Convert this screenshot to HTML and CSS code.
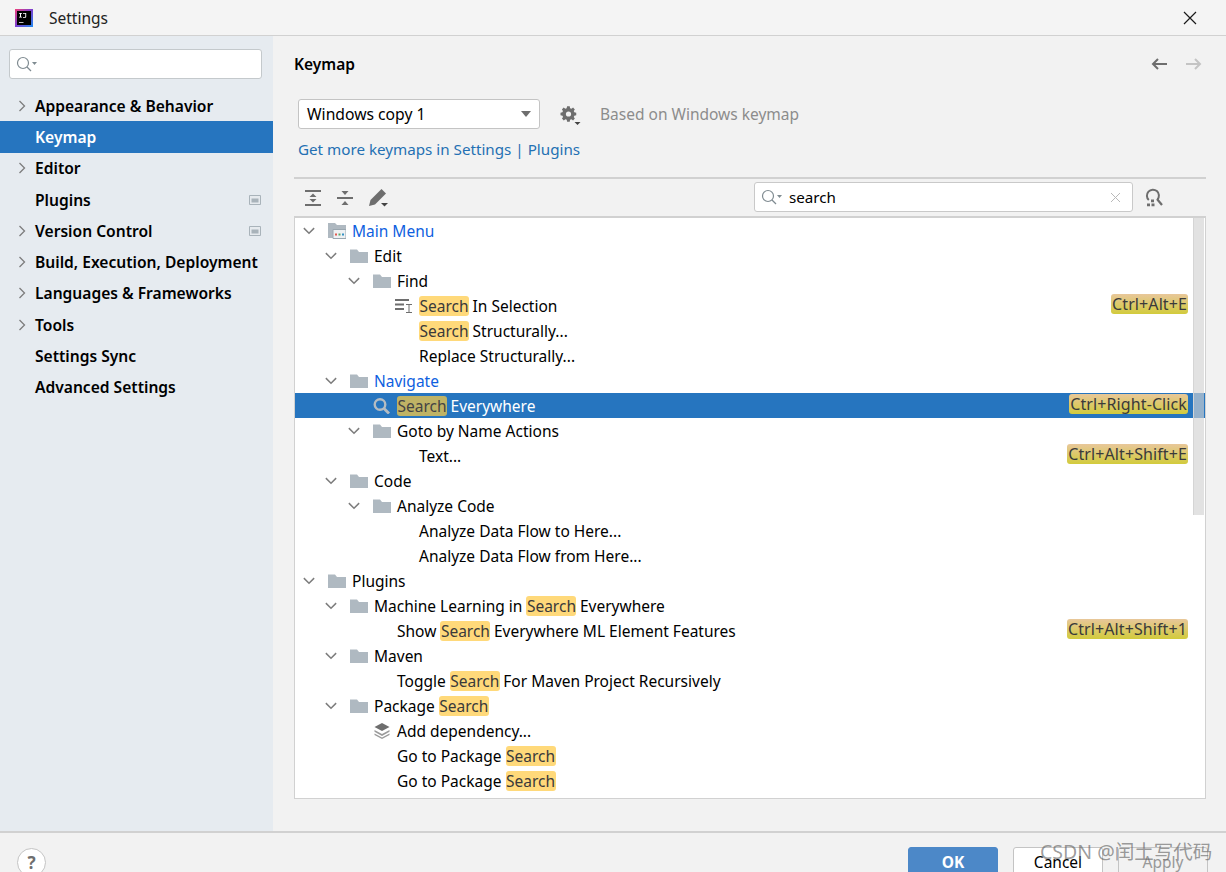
FILE: index.html
```html
<!DOCTYPE html>
<html lang="en">
<head>
<meta charset="utf-8">
<title>Settings</title>
<link rel="stylesheet" href="styles.css">
</head>
<body>
<svg class="defs" width="0" height="0" aria-hidden="true">
  <symbol id="folder" viewBox="0 0 18 16"><path d="M0 1.500h7l2 2.500h9v11H0z" fill="#afb9c1"/></symbol>
  <symbol id="down" viewBox="0 0 14 14"><path d="M2.500 4.500 7 9l4.500-4.500" fill="none" stroke="#7d7d7d" stroke-width="1.300"/></symbol>
  <symbol id="right" viewBox="0 0 14 14"><path d="M4.500 2 9.500 7l-5 5" fill="none" stroke="#7d7d7d" stroke-width="1.300"/></symbol>
  <symbol id="lens" viewBox="0 0 24 16"><circle cx="7" cy="7" r="5.500" fill="none" stroke="#7f8b91" stroke-width="1.200"/><path d="m11 11 4 4" stroke="#7f8b91" stroke-width="1.300"/><path d="M16 6h5l-2.500 3z" fill="#7f8b91"/></symbol>
  <symbol id="proj" viewBox="0 0 12 10"><path d="M.5.5h11v9H.5z" fill="#e6eaee" stroke="#a9b3ba"/><path d="M2.500 3.500h7v4h-7z" fill="#a9b3ba"/></symbol>
</svg>
<div class="window">
  <header class="titlebar">
    <svg class="logo" width="18" height="18" viewBox="0 0 18 18"><defs><linearGradient id="lg" x1="0" y1="0" x2="1" y2="1"><stop offset="0" stop-color="#f0407a"/><stop offset=".5" stop-color="#7a40d0"/><stop offset="1" stop-color="#1f8cf0"/></linearGradient></defs><path d="M0 0h18v18H0z" fill="url(#lg)"/><path d="M2 2h14v14H2z" fill="#000"/><path d="M4 4h3v.8H6v3h1v.8H4v-.8h1v-3H4zM8 4h3.200v3.800c0 .6-.5 1-1.200 1H8V8h1.800c.3 0 .5-.1.500-.4V4.800H8zM4 13h4.500v.8H4z" fill="#fff"/></svg>
    <span class="title">Settings</span>
    <svg class="close" width="14" height="14" viewBox="0 0 14 14"><path d="M1 1l12 12M13 1 1 13" stroke="#1a1a1a" stroke-width="1.200"/></svg>
  </header>
  <div class="main">
    <aside class="sidebar">
      <div class="side-search"><svg width="24" height="16"><use href="#lens"/></svg></div>
      <nav class="nav">
        <div class="nav-item"><svg class="nav-chev" width="14" height="14"><use href="#right"/></svg>Appearance &amp; Behavior</div>
        <div class="nav-item active">Keymap</div>
        <div class="nav-item"><svg class="nav-chev" width="14" height="14"><use href="#right"/></svg>Editor</div>
        <div class="nav-item">Plugins<svg class="nav-proj" width="12" height="10"><use href="#proj"/></svg></div>
        <div class="nav-item"><svg class="nav-chev" width="14" height="14"><use href="#right"/></svg>Version Control<svg class="nav-proj" width="12" height="10"><use href="#proj"/></svg></div>
        <div class="nav-item"><svg class="nav-chev" width="14" height="14"><use href="#right"/></svg>Build, Execution, Deployment</div>
        <div class="nav-item"><svg class="nav-chev" width="14" height="14"><use href="#right"/></svg>Languages &amp; Frameworks</div>
        <div class="nav-item"><svg class="nav-chev" width="14" height="14"><use href="#right"/></svg>Tools</div>
        <div class="nav-item">Settings Sync</div>
        <div class="nav-item">Advanced Settings</div>
      </nav>
    </aside>
    <section class="content">
      <div class="head">
        <h1 class="heading">Keymap</h1>
        <svg class="arrow" width="18" height="14" viewBox="0 0 18 14"><path d="M17 7H3M8 2 3 7l5 5" fill="none" stroke="#6e6e6e" stroke-width="2"/></svg>
        <svg class="arrow next" width="18" height="14" viewBox="0 0 18 14"><path d="M1 7h14M10 2l5 5-5 5" fill="none" stroke="#c4c4c4" stroke-width="2"/></svg>
      </div>
      <div class="scheme">
        <div class="combo">Windows copy 1<span class="caret"></span></div>
        <svg class="gear" width="22" height="22" viewBox="0 0 22 22"><path d="M9.200 2h3l.4 2.200 1.500.6L16 3.500l2 2.100-1.200 1.800.6 1.500 2.200.4v3l-2.200.4-.6 1.500 1.200 1.800-2 2.100-1.900-1.300-1.500.6-.4 2.200h-3l-.4-2.200-1.500-.6-1.900 1.300-2-2.100 1.200-1.800-.6-1.500L1.700 12.300v-3l2.200-.4.600-1.500-1.200-1.800 2-2.100 1.900 1.300 1.500-.6z" transform="translate(0 .5) scale(.88)" fill="#6e6e6e"/><circle cx="9.500" cy="10" r="2.600" fill="#f2f2f2"/><path d="M15.500 18h6l-3 3z" fill="#444"/></svg>
        <span class="based">Based on Windows keymap</span>
      </div>
      <div class="links"><a class="link">Get more keymaps in Settings | Plugins</a></div>
      <div class="toolbar">
        <div class="tools">
          <svg width="18" height="20" viewBox="0 0 18 20"><path d="M1 2h16v2H1zM1 16h16v2H1zM9 5.500l3.500 3.500h-7zM9 14.500 5.500 11h7z" fill="#6e6e6e"/></svg>
          <svg width="18" height="20" viewBox="0 0 18 20"><path d="M1 9h16v2H1zM5.500 3h7L9 7zM5.500 17h7L9 13z" fill="#6e6e6e"/></svg>
          <svg width="20" height="20" viewBox="0 0 20 20"><path d="M13.500 1 18 5.500 7 16.500 1 18l1.500-6z" fill="#6e6e6e"/><path d="M13 15h7l-3.500 3.500z" fill="#444"/></svg>
        </div>
        <div class="filter"><svg width="24" height="16"><use href="#lens"/></svg><span class="filter-text">search</span><svg class="clear" width="11" height="11" viewBox="0 0 11 11"><path d="M1 1l9 9M10 1l-9 9" stroke="#b9b9b9" stroke-width="1"/></svg></div>
        <svg class="find-shortcut" width="22" height="22" viewBox="0 0 22 22"><path d="M5.800 13A6 6 0 1 1 14.500 12.500" fill="none" stroke="#6e6e6e" stroke-width="2"/><path d="m14 12 5 6" stroke="#6e6e6e" stroke-width="2.200"/><path d="M8 12.500h3v2.800H8zM4 16.500h3v2.800H4zM8.500 16.500h3v2.800h-3z" fill="#6e6e6e"/></svg>
      </div>
      <div class="tree">
        <div class="row l0"><svg class="chev" width="16" height="16"><use href="#down"/></svg><svg class="ic" width="18" height="16" viewBox="0 0 18 16"><path d="M0 0h7l2 2h9v5H5v8H0z" fill="#afb9c1"/><path d="M5 6.500h13v9H5z" fill="#eef1f3" stroke="#9aa7b0"/><path d="M7 10.500h2v2H7z" fill="#e25b4f"/><path d="M10.500 10.500h2v2h-2z" fill="#59a869"/><path d="M14 10.500h2v2h-2z" fill="#3592c4"/></svg><span class="blue">Main Menu</span></div>
        <div class="row l1"><svg class="chev" width="16" height="16"><use href="#down"/></svg><svg class="ic" width="18" height="16"><use href="#folder"/></svg>Edit</div>
        <div class="row l2"><svg class="chev" width="16" height="16"><use href="#down"/></svg><svg class="ic" width="18" height="16"><use href="#folder"/></svg>Find</div>
        <div class="row l3"><span class="chev"></span><svg class="ic" width="18" height="16" viewBox="0 0 18 16"><path d="M0 1h14v2H0zM0 5.500h9v2H0zM0 10h9v2H0z" fill="#6e6e6e"/><path d="M11 6h6v1h-2.500v7H17v1h-6v-1h2.500V7H11z" fill="#6e6e6e"/></svg><mark class="hit">Search</mark>In Selection<span class="keys">Ctrl+Alt+E</span></div>
        <div class="row l3"><span class="chev"></span><span class="ic"></span><mark class="hit">Search</mark>Structurally...</div>
        <div class="row l3"><span class="chev"></span><span class="ic"></span>Replace Structurally...</div>
        <div class="row l1"><svg class="chev" width="16" height="16"><use href="#down"/></svg><svg class="ic" width="18" height="16"><use href="#folder"/></svg><span class="blue">Navigate</span></div>
        <div class="row l2 selected"><span class="chev"></span><svg class="ic" width="18" height="16" viewBox="0 0 18 16"><circle cx="7" cy="6.500" r="5.300" fill="none" stroke="#b5bcc2" stroke-width="2.400"/><path d="m11 10.500 5 5" stroke="#b5bcc2" stroke-width="2.800"/></svg><mark class="hit">Search</mark>Everywhere<span class="keys">Ctrl+Right-Click</span></div>
        <div class="row l2"><svg class="chev" width="16" height="16"><use href="#down"/></svg><svg class="ic" width="18" height="16"><use href="#folder"/></svg>Goto by Name Actions</div>
        <div class="row l3"><span class="chev"></span><span class="ic"></span>Text...<span class="keys">Ctrl+Alt+Shift+E</span></div>
        <div class="row l1"><svg class="chev" width="16" height="16"><use href="#down"/></svg><svg class="ic" width="18" height="16"><use href="#folder"/></svg>Code</div>
        <div class="row l2"><svg class="chev" width="16" height="16"><use href="#down"/></svg><svg class="ic" width="18" height="16"><use href="#folder"/></svg>Analyze Code</div>
        <div class="row l3"><span class="chev"></span><span class="ic"></span>Analyze Data Flow to Here...</div>
        <div class="row l3"><span class="chev"></span><span class="ic"></span>Analyze Data Flow from Here...</div>
        <div class="row l0"><svg class="chev" width="16" height="16"><use href="#down"/></svg><svg class="ic" width="18" height="16"><use href="#folder"/></svg>Plugins</div>
        <div class="row l1"><svg class="chev" width="16" height="16"><use href="#down"/></svg><svg class="ic" width="18" height="16"><use href="#folder"/></svg>Machine Learning in&nbsp;<mark class="hit">Search</mark>Everywhere</div>
        <div class="row l2"><span class="chev"></span><span class="ic"></span>Show&nbsp;<mark class="hit">Search</mark>Everywhere ML Element Features<span class="keys">Ctrl+Alt+Shift+1</span></div>
        <div class="row l1"><svg class="chev" width="16" height="16"><use href="#down"/></svg><svg class="ic" width="18" height="16"><use href="#folder"/></svg>Maven</div>
        <div class="row l2"><span class="chev"></span><span class="ic"></span>Toggle&nbsp;<mark class="hit">Search</mark>For Maven Project Recursively</div>
        <div class="row l1"><svg class="chev" width="16" height="16"><use href="#down"/></svg><svg class="ic" width="18" height="16"><use href="#folder"/></svg>Package&nbsp;<mark class="hit">Search</mark></div>
        <div class="row l2"><span class="chev"></span><svg class="ic" width="18" height="16" viewBox="0 0 18 16"><path d="M9 0l7.500 4L9 8 1.500 4z" fill="#6e6e6e"/><path d="M1.500 7 9 11l7.500-4v1.800L9 13 1.500 8.800zM1.500 10.500 9 14.500l7.500-4v1.500L9 16l-7.500-4z" fill="#9a9a9a"/></svg>Add dependency...</div>
        <div class="row l2"><span class="chev"></span><span class="ic"></span>Go to Package&nbsp;<mark class="hit">Search</mark></div>
        <div class="row l2"><span class="chev"></span><span class="ic"></span>Go to Package&nbsp;<mark class="hit">Search</mark></div>
        <div class="scrollbar"></div>
      </div>
    </section>
  </div>
  <footer class="footer">
    <div class="help">?</div>
    <div class="btn primary">OK</div>
    <div class="btn">Cancel</div>
    <div class="btn disabled">Apply</div>
  </footer>
  <div class="watermark">CSDN @闰土写代码</div>
</div>
</body>
</html>
```

FILE: styles.css
```css
* { box-sizing: border-box; }
html, body { margin: 0; height: 100%; overflow: hidden; }
body { font: 15.500px/20px "Noto Sans", "Noto Sans CJK SC", sans-serif; color: #000; background: #f2f2f2; }
.defs { position: absolute; }
.window { position: relative; display: flex; flex-direction: column; width: 1226px; height: 872px; overflow: hidden; }

.titlebar { display: flex; align-items: center; flex: none; height: 36px; padding: 0 29px 0 15px; background: #f4f4f4; border-bottom: 1px solid #d1d1d1; }
.title { margin-left: 16px; font-size: 15.500px; color: #222; }
.close { margin-left: auto; }

.main { display: flex; flex: none; height: 795px; }
.sidebar { flex: none; width: 273px; padding: 13px 0 0; background: #e6ebf0; }
.side-search { display: flex; align-items: center; width: 253px; height: 30px; margin-left: 9px; padding-left: 6px; background: #fff; border: 1px solid #c4c9cc; border-radius: 3px; }
.nav { margin-top: 11px; }
.nav-item { position: relative; display: flex; align-items: center; height: 31.300px; padding: 0 12px 0 35px; font-weight: 600; font-size: 15.600px; white-space: nowrap; }
.nav-item.active { background: #2675bf; color: #fff; }
.nav-chev { position: absolute; left: 15px; top: 8.500px; }
.nav-proj { margin-left: auto; }

.content { flex: 1; display: flex; flex-direction: column; padding: 0 20px 0 21px; min-width: 0; }
.head { display: flex; align-items: center; height: 56px; }
.heading { margin: 0 auto 0 0; font-size: 15.500px; font-weight: 600; }
.arrow { margin-right: 1px; }
.arrow.next { margin-left: 16px; margin-right: 3px; }
.scheme { display: flex; align-items: center; margin: 7px 0 0 4px; height: 30px; }
.combo { position: relative; width: 242px; height: 30px; padding: 4px 8px; background: #fff; border: 1px solid #c4c4c4; border-radius: 3px; font-size: 15.700px; }
.caret { position: absolute; right: 8px; top: 11px; border: 5.500px solid transparent; border-top: 6px solid #6e6e6e; border-bottom: 0; }
.gear { margin: 2px 0 0 19px; }
.based { margin-left: 19px; color: #8c8c8c; font-size: 15.500px; }
.links { margin: 10px 0 0 4px; height: 38px; }
.link { color: #2470b3; font-size: 15.200px; }
.toolbar { display: flex; align-items: center; height: 39px; border-top: 2px solid #d1d1d1; }
.tools { display: flex; align-items: center; gap: 14px; padding-left: 10px; }
.filter { display: flex; align-items: center; width: 379px; height: 30px; margin: 0 0 1px auto; padding: 0 11px 0 6px; background: #fff; border: 1px solid #c9c9c9; border-radius: 3px; }
.filter-text { margin-left: 4px; font-size: 15.200px; }
.clear { margin-left: auto; }
.find-shortcut { margin: 0 41px 0 10px; }

.tree { position: relative; flex: none; height: 583px; background: #fff; border: 1px solid #d1d1d1; border-top-width: 2px; overflow: hidden; }
.row { display: flex; align-items: center; height: 25px; padding-right: 17px; white-space: nowrap; font-size: 15.500px; }
.row.l0 { padding-left: 6px; }
.row.l1 { padding-left: 28px; }
.row.l2 { padding-left: 51px; }
.row.l3 { padding-left: 73px; }
.chev { flex: none; width: 16px; margin-right: 11px; }
.ic { flex: none; width: 18px; height: 16px; margin-right: 6px; }
.blue { color: #0f5fe0; }
.hit { padding: 0 .5px; height: 20px; margin: 0 3.500px 0 0; background: #ffd97a; color: #3a3a3a; border-radius: 3px; line-height: 20px; }
.row.selected { background: #2675bf; color: #fff; }
.row.selected .hit { background: #bfb365; color: #444; }
.keys { margin: 0 0 4px auto; padding: 0 1px; height: 20px; line-height: 20px; border-radius: 3px; font-size: 16px; letter-spacing: .1px; color: #3a3a3a; background: linear-gradient(#e8c79a, #d2cb3c); }
.scrollbar { position: absolute; top: 0; right: 1px; width: 11px; height: 297px; background: rgba(210, 210, 210, .65); border-left: 1px solid #d5d5d5; }

.footer { flex: none; display: flex; align-items: flex-start; height: 41px; padding: 14px 18px 0 17px; border-top: 2px solid #d1d1d1; background: #f2f2f2; }
.help { width: 29px; height: 29px; margin-top: 1px; background: #fff; border: 1px solid #c4c4c4; border-radius: 50%; color: #6e6e6e; font-weight: 700; font-size: 17px; line-height: 27px; text-align: center; }
.btn { width: 90px; height: 30px; margin-left: 15px; background: #fff; border: 1px solid #c4c4c4; border-radius: 3px; text-align: center; line-height: 28px; }
.btn.primary { margin-left: auto; background: #4c88c8; border-color: #4c88c8; color: #fff; font-weight: 700; }
.btn.disabled { background: transparent; color: #999; }
.watermark { position: absolute; left: 1040px; top: 839px; font-size: 19.500px; line-height: 26px; color: rgba(100, 100, 100, .65); white-space: nowrap; }
```
